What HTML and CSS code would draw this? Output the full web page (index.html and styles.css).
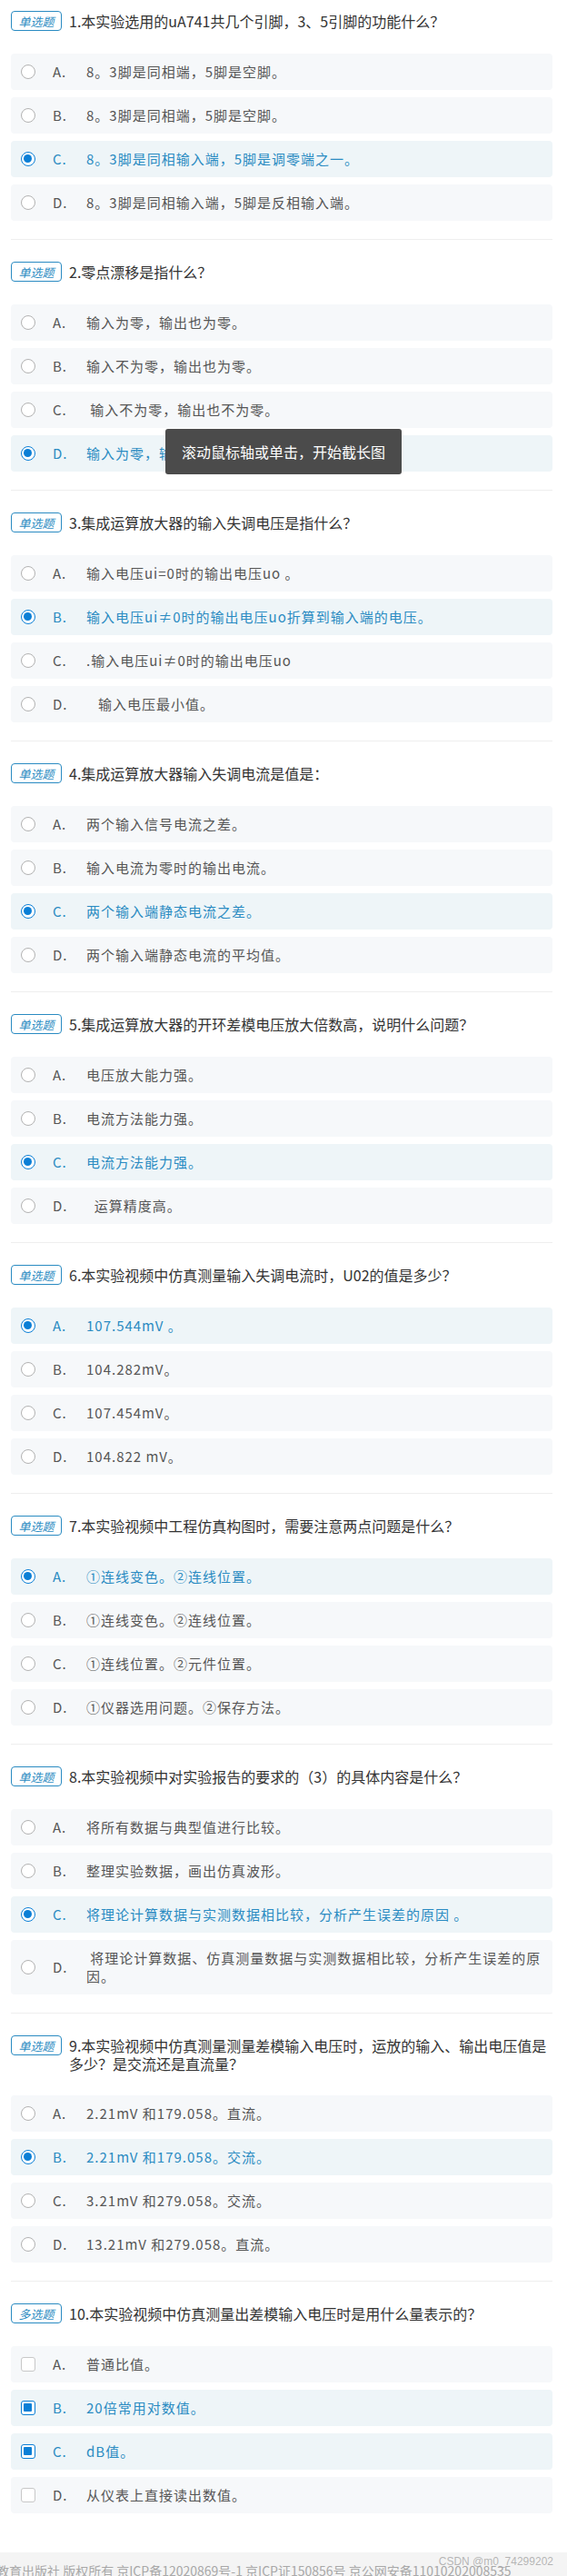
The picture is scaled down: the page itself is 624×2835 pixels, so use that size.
FILE: index.html
```html
<!DOCTYPE html>
<html lang="zh-CN">
<head>
<meta charset="utf-8">
<title>题目</title>
<link rel="stylesheet" href="styles.css">
</head>
<body>
<div class="page">

  <div class="question">
    <div class="q-title"><span class="badge">单选题</span><div class="q-text">1.本实验选用的uA741共几个引脚，3、5引脚的功能什么？</div></div>
    <div class="options">
      <div class="option"><span class="radio"></span><span class="letter">A.</span><span class="text">8。3脚是同相端，5脚是空脚。</span></div>
      <div class="option"><span class="radio"></span><span class="letter">B.</span><span class="text">8。3脚是同相端，5脚是空脚。</span></div>
      <div class="option sel"><span class="radio on"></span><span class="letter">C.</span><span class="text">8。3脚是同相输入端，5脚是调零端之一。</span></div>
      <div class="option"><span class="radio"></span><span class="letter">D.</span><span class="text">8。3脚是同相输入端，5脚是反相输入端。</span></div>
    </div>
  </div>

  <div class="question">
    <div class="q-title"><span class="badge">单选题</span><div class="q-text">2.零点漂移是指什么？</div></div>
    <div class="options">
      <div class="option"><span class="radio"></span><span class="letter">A.</span><span class="text">输入为零，输出也为零。</span></div>
      <div class="option"><span class="radio"></span><span class="letter">B.</span><span class="text">输入不为零，输出也为零。</span></div>
      <div class="option"><span class="radio"></span><span class="letter">C.</span><span class="text">&nbsp;输入不为零，输出也不为零。</span></div>
      <div class="option sel"><span class="radio on"></span><span class="letter">D.</span><span class="text">输入为零，输出不为零。</span></div>
    </div>
  </div>

  <div class="question">
    <div class="q-title"><span class="badge">单选题</span><div class="q-text">3.集成运算放大器的输入失调电压是指什么？</div></div>
    <div class="options">
      <div class="option"><span class="radio"></span><span class="letter">A.</span><span class="text">输入电压ui=0时的输出电压uo 。</span></div>
      <div class="option sel"><span class="radio on"></span><span class="letter">B.</span><span class="text">输入电压ui≠0时的输出电压uo折算到输入端的电压。</span></div>
      <div class="option"><span class="radio"></span><span class="letter">C.</span><span class="text">.输入电压ui≠0时的输出电压uo</span></div>
      <div class="option"><span class="radio"></span><span class="letter">D.</span><span class="text">&nbsp;&nbsp;&nbsp;输入电压最小值。</span></div>
    </div>
  </div>

  <div class="question">
    <div class="q-title"><span class="badge">单选题</span><div class="q-text">4.集成运算放大器输入失调电流是值是：</div></div>
    <div class="options">
      <div class="option"><span class="radio"></span><span class="letter">A.</span><span class="text">两个输入信号电流之差。</span></div>
      <div class="option"><span class="radio"></span><span class="letter">B.</span><span class="text">输入电流为零时的输出电流。</span></div>
      <div class="option sel"><span class="radio on"></span><span class="letter">C.</span><span class="text">两个输入端静态电流之差。</span></div>
      <div class="option"><span class="radio"></span><span class="letter">D.</span><span class="text">两个输入端静态电流的平均值。</span></div>
    </div>
  </div>

  <div class="question">
    <div class="q-title"><span class="badge">单选题</span><div class="q-text">5.集成运算放大器的开环差模电压放大倍数高，说明什么问题？</div></div>
    <div class="options">
      <div class="option"><span class="radio"></span><span class="letter">A.</span><span class="text">电压放大能力强。</span></div>
      <div class="option"><span class="radio"></span><span class="letter">B.</span><span class="text">电流方法能力强。</span></div>
      <div class="option sel"><span class="radio on"></span><span class="letter">C.</span><span class="text">电流方法能力强。</span></div>
      <div class="option"><span class="radio"></span><span class="letter">D.</span><span class="text">&nbsp;&nbsp;运算精度高。</span></div>
    </div>
  </div>

  <div class="question">
    <div class="q-title"><span class="badge">单选题</span><div class="q-text">6.本实验视频中仿真测量输入失调电流时，U02的值是多少？</div></div>
    <div class="options">
      <div class="option sel"><span class="radio on"></span><span class="letter">A.</span><span class="text">107.544mV 。</span></div>
      <div class="option"><span class="radio"></span><span class="letter">B.</span><span class="text">104.282mV。</span></div>
      <div class="option"><span class="radio"></span><span class="letter">C.</span><span class="text">107.454mV。</span></div>
      <div class="option"><span class="radio"></span><span class="letter">D.</span><span class="text">104.822 mV。</span></div>
    </div>
  </div>

  <div class="question">
    <div class="q-title"><span class="badge">单选题</span><div class="q-text">7.本实验视频中工程仿真构图时，需要注意两点问题是什么？</div></div>
    <div class="options">
      <div class="option sel"><span class="radio on"></span><span class="letter">A.</span><span class="text">①连线变色。②连线位置。</span></div>
      <div class="option"><span class="radio"></span><span class="letter">B.</span><span class="text">①连线变色。②连线位置。</span></div>
      <div class="option"><span class="radio"></span><span class="letter">C.</span><span class="text">①连线位置。②元件位置。</span></div>
      <div class="option"><span class="radio"></span><span class="letter">D.</span><span class="text">①仪器选用问题。②保存方法。</span></div>
    </div>
  </div>

  <div class="question">
    <div class="q-title"><span class="badge">单选题</span><div class="q-text">8.本实验视频中对实验报告的要求的（3）的具体内容是什么？</div></div>
    <div class="options">
      <div class="option"><span class="radio"></span><span class="letter">A.</span><span class="text">将所有数据与典型值进行比较。</span></div>
      <div class="option"><span class="radio"></span><span class="letter">B.</span><span class="text">整理实验数据，画出仿真波形。</span></div>
      <div class="option sel"><span class="radio on"></span><span class="letter">C.</span><span class="text">将理论计算数据与实测数据相比较，分析产生误差的原因 。</span></div>
      <div class="option"><span class="radio"></span><span class="letter">D.</span><span class="text">&nbsp;将理论计算数据、仿真测量数据与实测数据相比较，分析产生误差的原因。</span></div>
    </div>
  </div>

  <div class="question">
    <div class="q-title"><span class="badge">单选题</span><div class="q-text">9.本实验视频中仿真测量测量差模输入电压时，运放的输入、输出电压值是多少？是交流还是直流量？</div></div>
    <div class="options">
      <div class="option"><span class="radio"></span><span class="letter">A.</span><span class="text">2.21mV 和179.058。直流。</span></div>
      <div class="option sel"><span class="radio on"></span><span class="letter">B.</span><span class="text">2.21mV 和179.058。交流。</span></div>
      <div class="option"><span class="radio"></span><span class="letter">C.</span><span class="text">3.21mV 和279.058。交流。</span></div>
      <div class="option"><span class="radio"></span><span class="letter">D.</span><span class="text">13.21mV 和279.058。直流。</span></div>
    </div>
  </div>

  <div class="question">
    <div class="q-title"><span class="badge">多选题</span><div class="q-text">10.本实验视频中仿真测量出差模输入电压时是用什么量表示的？</div></div>
    <div class="options">
      <div class="option"><span class="check"></span><span class="letter">A.</span><span class="text">普通比值。</span></div>
      <div class="option sel"><span class="check on"></span><span class="letter">B.</span><span class="text">20倍常用对数值。</span></div>
      <div class="option sel"><span class="check on"></span><span class="letter">C.</span><span class="text">dB值。</span></div>
      <div class="option"><span class="check"></span><span class="letter">D.</span><span class="text">从仪表上直接读出数值。</span></div>
    </div>
  </div>

</div>

<div class="footer">
  <div class="footer-text">高等教育出版社 版权所有 京ICP备12020869号-1 京ICP证150856号 京公网安备11010202008535</div>
  <div class="watermark">CSDN @m0_74299202</div>
</div>

<div class="toast">滚动鼠标轴或单击，开始截长图</div>
</body>
</html>
```

FILE: styles.css
```css
html, body {
  margin: 0;
  padding: 0;
  overflow: hidden;
  background: #ffffff;
}

body {
  position: relative;
  font-family: "Noto Sans CJK SC", "Noto Sans", sans-serif;
  color: #555555;
}

.page {
  padding: 0 16px 0 12px;
}

.question {
  padding: 24px 0 20px;
  border-bottom: 1px solid #eeeeee;
}

.question:first-child {
  padding-top: 12px;
}

.question:last-child {
  border-bottom: none;
  padding-bottom: 43px;
}

.q-title {
  display: flex;
  align-items: flex-start;
  gap: 8px;
}

.badge {
  flex: none;
  box-sizing: border-box;
  width: 56px;
  height: 22px;
  border: 1px solid #2a8bc2;
  border-radius: 4px;
  display: flex;
  align-items: center;
  justify-content: center;
  color: #2a8bc2;
  font-size: 13px;
  font-style: italic;
  line-height: 1;
  background: #ffffff;
}

.q-text {
  flex: 1;
  min-width: 0;
  margin-top: 1px;
  font-size: 16px;
  line-height: 20px;
  color: #333333;
}

.options {
  margin-top: 25px;
  display: flex;
  flex-direction: column;
  gap: 8px;
}

.option {
  display: flex;
  align-items: center;
  box-sizing: border-box;
  min-height: 40px;
  padding: 10px 8px 10px 11px;
  background: #f6f8fa;
  border-radius: 4px;
  font-size: 15px;
  line-height: 20px;
  letter-spacing: 1px;
  color: #555555;
}

.option.sel {
  background: #eef5f8;
  color: #2a8bc2;
}

.radio {
  flex: none;
  box-sizing: border-box;
  width: 16px;
  height: 16px;
  border: 1px solid #b2b2b2;
  border-radius: 50%;
  background: #ffffff;
  position: relative;
}

.radio.on {
  border: 1.5px solid #0b7fd6;
}

.radio.on::after {
  content: "";
  position: absolute;
  left: 2px;
  top: 2px;
  width: 9px;
  height: 9px;
  border-radius: 50%;
  background: #0b7fd6;
}

.check {
  flex: none;
  box-sizing: border-box;
  width: 16px;
  height: 16px;
  border: 1px solid #c8c8c8;
  border-radius: 3px;
  background: #ffffff;
  position: relative;
}

.check.on {
  border: 1.5px solid #0b7fd6;
}

.check.on::after {
  content: "";
  position: absolute;
  left: 2px;
  top: 2px;
  width: 9px;
  height: 9px;
  border-radius: 1px;
  background: #0b7fd6;
}

.letter {
  flex: none;
  width: 37px;
  margin-left: 19px;
}

.text {
  flex: 1;
  min-width: 0;
}

.footer {
  position: relative;
  box-sizing: border-box;
  height: 27px;
  padding-top: 9px;
  background: #f4f4f4;
  overflow: hidden;
}

.footer-text {
  margin-left: -32px;
  white-space: nowrap;
  font-size: 14px;
  line-height: 22px;
  color: #a8a8a8;
}

.watermark {
  position: absolute;
  right: 15px;
  top: 3px;
  font-family: "Liberation Sans", "DejaVu Sans", sans-serif;
  font-size: 12px;
  line-height: 14px;
  color: rgba(160, 160, 160, 0.75);
}

.toast {
  position: absolute;
  left: 182px;
  top: 472px;
  width: 260px;
  height: 50px;
  display: flex;
  align-items: center;
  justify-content: center;
  background: #4b4b4b;
  border-radius: 3px;
  color: #ffffff;
  font-size: 16px;
}
```
